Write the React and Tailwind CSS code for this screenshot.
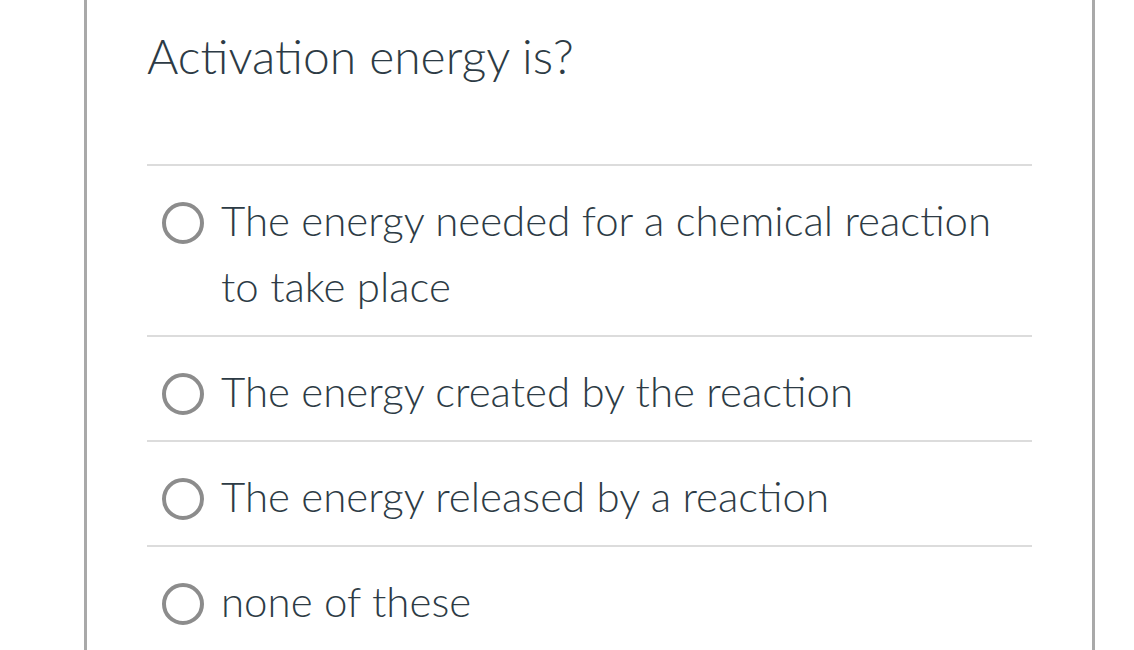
const answers = [
  'The energy needed for a chemical reaction to take place',
  'The energy created by the reaction',
  'The energy released by a reaction',
  'none of these',
];

function Radio() {
  return (
    <span className="mt-[15px] ml-[15px] block h-[42px] w-[42px] shrink-0 rounded-full border-[4px] border-[#8c8c8c] bg-white" />
  );
}

export default function App() {
  return (
    <div className="h-[650px] overflow-hidden bg-white" style={{ fontFamily: 'Lato, "Noto Sans", sans-serif' }}>
      <div className="ml-[84px] h-full w-[1011px] border-x-[3px] border-[#a9a9a9] px-[60px] text-[#2d3b45]">
        <h1 className="pt-[26px] text-[48px] font-light leading-[60px]">Activation energy is?</h1>
        <div className="mt-[78px]">
          {answers.map((text) => (
            <div key={text} className="flex gap-[17px] border-t-2 border-[#dcdcdc] pt-[21px] pb-[16px]">
              <Radio />
              <span className="text-[42px] font-light leading-[66px]">{text}</span>
            </div>
          ))}
        </div>
      </div>
    </div>
  );
}
